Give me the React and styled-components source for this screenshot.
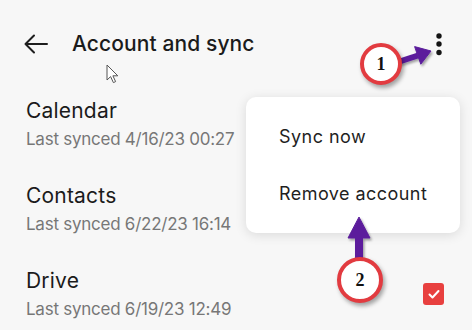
import React from "react";
import styled, { createGlobalStyle } from "styled-components";

const GlobalStyle = createGlobalStyle`
  html, body { margin: 0; padding: 0; background: #ffffff; }
  body { font-family: Inter, "Liberation Sans", Arial, sans-serif; }
`;

const Screen = styled.div`
  position: relative;
  width: 472px;
  height: 330px;
  background: #f7f7f7;
  overflow: hidden;
  color: #1b1b1b;
`;

const Header = styled.header`
  display: flex;
  align-items: center;
  height: 88px;
  padding: 0 21px 0 24px;
  box-sizing: border-box;
  gap: 24px;
`;

const IconButton = styled.div`
  display: flex;
  align-items: center;
  justify-content: center;
  width: 24px;
  height: 24px;
`;

const Title = styled.h1`
  flex: 1;
  margin: 0;
  font-size: 21px;
  line-height: 26px;
  font-weight: 500;
  letter-spacing: 0.1px;
  color: #1b1b1b;
`;

const List = styled.div`
  display: flex;
  flex-direction: column;
`;

const Row = styled.div`
  display: flex;
  align-items: center;
  height: 85px;
  box-sizing: border-box;
  padding: 10px 28px 23px 26px;
`;

const RowText = styled.div`
  flex: 1;
  display: flex;
  flex-direction: column;
  gap: 4px;
`;

const RowTitle = styled.div`
  font-size: 21px;
  line-height: 26px;
  letter-spacing: 0.2px;
  color: #1b1b1b;
`;

const RowSub = styled.div`
  font-size: 17px;
  line-height: 22px;
  letter-spacing: -0.25px;
  color: #777777;
`;

const Check = styled.div`
  width: 21px;
  height: 22px;
  border-radius: 3px;
  background: #e8403f;
  display: flex;
  align-items: center;
  justify-content: center;
`;

const Menu = styled.div`
  position: absolute;
  left: 246px;
  top: 97px;
  width: 214px;
  padding: 11px 0;
  background: #ffffff;
  border-radius: 10px;
  box-shadow: 0 2px 12px rgba(0, 0, 0, 0.12);
`;

const MenuItem = styled.div`
  height: 57px;
  line-height: 57px;
  padding-left: 33px;
  font-size: 18px;
  letter-spacing: 0.45px;
  color: #1f1f1f;
`;

const Overlay = styled.svg`
  position: absolute;
  left: 0;
  top: 0;
  pointer-events: none;
`;

const Badge = styled.div`
  position: absolute;
  left: ${(p) => p.$x - p.$size / 2}px;
  top: ${(p) => p.$y - p.$size / 2}px;
  width: ${(p) => p.$size}px;
  height: ${(p) => p.$size}px;
  box-sizing: border-box;
  border: 4px solid #e23b40;
  border-radius: 50%;
  background: #ffffff;
  box-shadow: 2px 3px 4px rgba(0, 0, 0, 0.35);
  display: flex;
  align-items: center;
  justify-content: center;
  font-family: "Liberation Serif", "DejaVu Serif", serif;
  font-weight: bold;
  font-size: 18px;
  color: #111;
`;

const Cursor = styled.svg`
  position: absolute;
  left: 106px;
  top: 64px;
`;

const items = [
  { name: "Calendar", synced: "Last synced 4/16/23 00:27" },
  { name: "Contacts", synced: "Last synced 6/22/23 16:14" },
  { name: "Drive", synced: "Last synced 6/19/23 12:49", checked: true },
];

export default function App() {
  return (
    <>
      <GlobalStyle />
      <Screen>
        <Header>
          <IconButton>
            <svg width="24" height="24" viewBox="0 0 24 24" fill="none" stroke="#1e1e1e" strokeWidth="2" strokeLinecap="round" strokeLinejoin="round">
              <path d="M23 12H1.5M10 3.5L1.5 12L10 20.5" />
            </svg>
          </IconButton>
          <Title>Account and sync</Title>
          <IconButton>
            <svg width="24" height="24" viewBox="0 0 24 24" fill="#141414">
              <circle cx="12" cy="4" r="2.7" />
              <circle cx="12" cy="12" r="2.7" />
              <circle cx="12" cy="20.5" r="2.7" />
            </svg>
          </IconButton>
        </Header>
        <List>
          {items.map((it) => (
            <Row key={it.name}>
              <RowText>
                <RowTitle>{it.name}</RowTitle>
                <RowSub>{it.synced}</RowSub>
              </RowText>
              {it.checked && (
                <Check>
                  <svg width="14" height="14" viewBox="0 0 14 14" fill="none" stroke="#fff" strokeWidth="2" strokeLinecap="round" strokeLinejoin="round">
                    <path d="M2.5 7.5L5.5 10.5L11.5 4" />
                  </svg>
                </Check>
              )}
            </Row>
          ))}
        </List>

        <Menu>
          <MenuItem>Sync now</MenuItem>
          <MenuItem>Remove account</MenuItem>
        </Menu>

        <Cursor width="13" height="20" viewBox="0 0 13 20">
          <path d="M1 1V16L4.6 12.6L7.4 18.6L9.6 17.6L6.9 11.8H11.8Z" fill="#fff" stroke="#555" strokeWidth="1" strokeLinejoin="round" />
        </Cursor>

        <Overlay width="472" height="330" viewBox="0 0 472 330">
          <defs>
            <filter id="sh" x="-20%" y="-20%" width="160%" height="160%">
              <feDropShadow dx="1.5" dy="2" stdDeviation="1.2" floodColor="#000" floodOpacity="0.35" />
            </filter>
          </defs>
          <g fill="#5c1f9c" stroke="#5c1f9c" filter="url(#sh)">
            <path d="M398 62 L418 55.5" strokeWidth="6" />
            <polygon points="431,51 420.8,64.2 414.6,46.6" strokeWidth="1" strokeLinejoin="round" />
            <path d="M359 260 V236" strokeWidth="8" />
            <polygon points="359,217 370,238 348,238" strokeWidth="1" strokeLinejoin="round" />
          </g>
        </Overlay>

        <Badge $x={381} $y={64} $size={42}>1</Badge>
        <Badge $x={360} $y={280} $size={46}>2</Badge>
      </Screen>
    </>
  );
}
